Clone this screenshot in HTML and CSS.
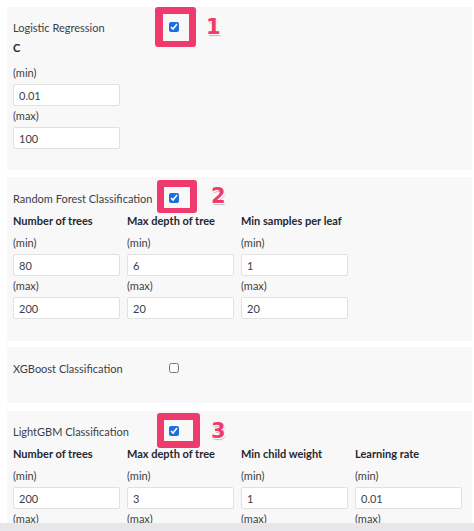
FILE: index.html
```html
<!DOCTYPE html>
<html lang="en">
<head>
    <meta charset="UTF-8">
    <meta name="viewport" content="width=device-width, initial-scale=1.0">
    <title>Model selection</title>
    <link rel="stylesheet" href="styles.css">
</head>
<body>
    <div class="panel panel-lr">
        <div class="model-row">
            <span class="model-name">Logistic Regression</span>
            <span class="check-cell">
                <input type="checkbox" class="check" checked>
                <span class="mark mark-1"></span>
                <span class="mark-num num-1">1</span>
            </span>
        </div>
        <div class="params">
            <div class="param">
                <p class="param-name param-name-c">C</p>
                <p class="bound bound-first">(min)</p>
                <input class="field" type="text" value="0.01">
                <p class="bound">(max)</p>
                <input class="field" type="text" value="100">
            </div>
        </div>
    </div>

    <div class="panel panel-rf">
        <div class="model-row">
            <span class="model-name">Random Forest Classification</span>
            <span class="check-cell">
                <input type="checkbox" class="check" checked>
                <span class="mark mark-2"></span>
                <span class="mark-num num-2">2</span>
            </span>
        </div>
        <div class="params">
            <div class="param">
                <p class="param-name">Number of trees</p>
                <p class="bound bound-first">(min)</p>
                <input class="field" type="text" value="80">
                <p class="bound">(max)</p>
                <input class="field" type="text" value="200">
            </div>
            <div class="param">
                <p class="param-name">Max depth of tree</p>
                <p class="bound bound-first">(min)</p>
                <input class="field" type="text" value="6">
                <p class="bound">(max)</p>
                <input class="field" type="text" value="20">
            </div>
            <div class="param">
                <p class="param-name">Min samples per leaf</p>
                <p class="bound bound-first">(min)</p>
                <input class="field" type="text" value="1">
                <p class="bound">(max)</p>
                <input class="field" type="text" value="20">
            </div>
        </div>
    </div>

    <div class="panel panel-xgb">
        <div class="model-row">
            <span class="model-name">XGBoost Classification</span>
            <span class="check-cell">
                <input type="checkbox" class="check">
            </span>
        </div>
    </div>

    <div class="panel panel-lgbm">
        <div class="model-row">
            <span class="model-name">LightGBM Classification</span>
            <span class="check-cell">
                <input type="checkbox" class="check" checked>
                <span class="mark mark-3"></span>
                <span class="mark-num num-3">3</span>
            </span>
        </div>
        <div class="params">
            <div class="param">
                <p class="param-name">Number of trees</p>
                <p class="bound bound-first">(min)</p>
                <input class="field" type="text" value="200">
                <p class="bound">(max)</p>
                <input class="field" type="text" value="500">
            </div>
            <div class="param">
                <p class="param-name">Max depth of tree</p>
                <p class="bound bound-first">(min)</p>
                <input class="field" type="text" value="3">
                <p class="bound">(max)</p>
                <input class="field" type="text" value="10">
            </div>
            <div class="param">
                <p class="param-name">Min child weight</p>
                <p class="bound bound-first">(min)</p>
                <input class="field" type="text" value="1">
                <p class="bound">(max)</p>
                <input class="field" type="text" value="10">
            </div>
            <div class="param">
                <p class="param-name">Learning rate</p>
                <p class="bound bound-first">(min)</p>
                <input class="field" type="text" value="0.01">
                <p class="bound">(max)</p>
                <input class="field" type="text" value="0.3">
            </div>
        </div>
    </div>

    <div class="status-bar"></div>
</body>
</html>
```

FILE: styles.css
```css
html, body {
    overflow: hidden;
}
body {
    margin: 0;
    padding: 7px 2px 0 7px;
    background-color: #fff;
    font-family: "Lato", "Open Sans", sans-serif;
    font-size: 11px;
    color: #3d3e45;
}
p {
    margin: 0;
}
.panel {
    background: #f8f8f8;
    padding: 10px 6px 21px 6px;
    margin-bottom: 7px;
}
.panel-rf {
    padding-top: 11px;
    padding-bottom: 22px;
    margin-bottom: 6px;
}
.panel-xgb {
    padding-top: 11px;
    padding-bottom: 25px;
    margin-bottom: 8px;
}
.model-row {
    display: grid;
    grid-template-columns: 156px auto;
    align-items: center;
    height: 20px;
}
.model-name {
    font-size: 11px;
    color: #3d3e45;
}
.check-cell {
    position: relative;
    display: flex;
    align-items: center;
    height: 20px;
}
.check {
    margin: 0;
    width: 10px;
    height: 10px;
    accent-color: #1a6fe0;
}
.mark {
    position: absolute;
    border: 7px solid #ef3a6e;
    border-radius: 3px;
    box-sizing: border-box;
}
.mark-1 {
    left: -14px;
    top: -10px;
    width: 41px;
    height: 40px;
    border-left-width: 8px;
    border-bottom-width: 6px;
}
.mark-2 {
    left: -12px;
    top: -8px;
    width: 40px;
    height: 33px;
    border-bottom-width: 5px;
}
.mark-3 {
    left: -12px;
    top: -8px;
    width: 43px;
    height: 35px;
}
.mark-num {
    position: absolute;
    top: -2px;
    font-family: "DejaVu Sans", sans-serif;
    font-weight: bold;
    font-size: 21px;
    line-height: 20px;
    color: #ee3a6e;
    text-shadow: 0 0 1px #fff, 1px 1px 0 #fff, 1px 2px 1px rgba(0, 0, 0, 0.25);
}
.num-1 {
    left: 37px;
    top: 0;
}
.num-2 {
    left: 42px;
    top: -2px;
}
.num-3 {
    left: 42px;
    top: 0;
}
.params {
    display: flex;
    gap: 7px;
}
.param {
    width: 107px;
    display: flex;
    flex-direction: column;
}
.param-name {
    font-weight: bold;
    color: #262730;
    line-height: 14px;
    margin-top: 6px;
}
.param-name-c {
    margin-top: 4px;
}
.bound {
    line-height: 14px;
    margin-top: 3px;
}
.bound-first {
    margin-top: 8px;
}
.panel-lr .bound-first {
    margin-top: 11px;
}
.field {
    box-sizing: border-box;
    width: 107px;
    height: 22px;
    margin: 4px 0 0 0;
    padding: 0 5px;
    border: 1px solid #e1e1e1;
    border-radius: 2px;
    background: #fff;
    font-family: "Lato", "Open Sans", sans-serif;
    font-size: 11px;
    color: #3d3e45;
}
.status-bar {
    position: fixed;
    left: 0;
    right: 0;
    bottom: 0;
    height: 8px;
    background: #e7e7e9;
}
```
